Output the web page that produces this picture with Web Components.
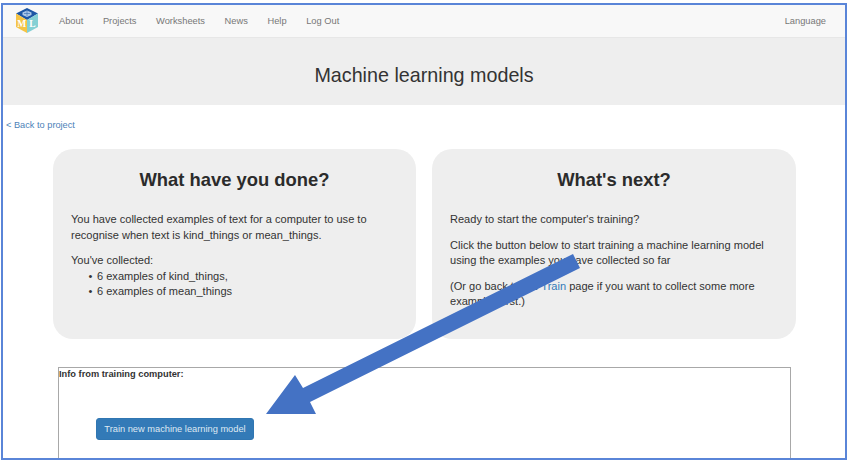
<!DOCTYPE html>
<html lang="en"><head><meta charset="utf-8"><title>Machine learning models</title>
<style>
html,body{margin:0;padding:0;background:#fff}
body{font-family:"Liberation Sans",Arial,sans-serif;width:850px;height:465px;overflow:hidden}
ml-card a{color:#337ab7}
ml-card li{list-style:none}
ml-card li::before{content:"•";display:inline-block;width:8.5px}
</style></head><body>
<ml-frame>
  <ml-nav></ml-nav>
  <ml-title>Machine learning models</ml-title>
  <ml-back>&lt; Back to project</ml-back>
  <ml-cards>
    <ml-card heading="What have you done?">
      <p>You have collected examples of text for a computer to use to recognise when text is kind_things or mean_things.</p>
      <p class="tight">You've collected:</p>
      <ul><li>6 examples of kind_things,</li><li>6 examples of mean_things</li></ul>
    </ml-card>
    <ml-card heading="What's next?">
      <p>Ready to start the computer's training?</p>
      <p>Click the button below to start training a machine learning model using the examples you have collected so far</p>
      <p>(Or go back to the <a>Train</a> page if you want to collect some more examples first.)</p>
    </ml-card>
  </ml-cards>
  <ml-training></ml-training>
  <ml-arrow></ml-arrow>
</ml-frame>
<script>
function def(name, css, html, setup){
  customElements.define(name, class extends HTMLElement{
    constructor(){super();const r=this.attachShadow({mode:'open'});r.innerHTML='<style>'+css+'</style>'+html;if(setup)setup(this,r);}
  });
}
def('ml-frame',`:host{display:block;position:relative;box-sizing:border-box;width:846px;height:457px;margin:3px 0 0 1px;border:2px solid #5a85d8;overflow:hidden;background:#fff;color:#333}`,`<slot></slot>`);
def('ml-nav',`:host{display:flex;align-items:center;box-sizing:border-box;height:33px;background:#f8f8f8;border-bottom:1px solid #e7e7e7;padding:0 19px 1px 13px;font-size:9.3px;color:#777}
svg{display:block;width:22px;height:25px;margin:0 21px 1px 0}
nav{display:flex;gap:19.6px;flex:1}
text{font-family:"Liberation Serif",serif;font-weight:700}`,
`<svg viewBox="0 0 22 25"><polygon points="11,0 22,5.5 11,12 0,5.5" fill="#1c56a4"/><polygon points="0,5.5 11,12 11,25 0,19" fill="#f5c445"/><polygon points="22,5.5 11,12 11,25 22,19" fill="#84d0d4"/><polygon points="11,2.5 15.5,4.5 15.5,7 11,9 6.5,7 6.5,4.5" fill="#a9c6e8"/><path d="M8 5.5h6M11 3v5" stroke="#3d74b8" stroke-width=".7" fill="none"/><text x="5.7" y="19" font-size="9.5" fill="#fff" text-anchor="middle">M</text><text x="16.5" y="19" font-size="9.5" fill="#fff" text-anchor="middle">L</text></svg>
<nav><span>About</span><span>Projects</span><span>Worksheets</span><span>News</span><span>Help</span><span>Log Out</span></nav><span>Language</span>`);
def('ml-title',`:host{display:flex;align-items:center;justify-content:center;height:67px;background:#eee;font-size:19.73px;color:#333;padding-top:7px;box-sizing:border-box}`,`<slot></slot>`);
def('ml-back',`:host{display:block;margin:14px 0 0 3px;font-size:9.23px;line-height:12px;color:#4d82b8}`,`<slot></slot>`);
def('ml-cards',`:host{display:grid;grid-template-columns:363px 364px;gap:16px;margin:18px 0 0 50px}`,`<slot></slot>`);
def('ml-card',`:host{display:block;box-sizing:border-box;height:190px;background:#eee;border-radius:20px;padding:20px 18px 0;font-size:11.05px;line-height:15.6px;color:#333}
h2{margin:0 0 21px;font-size:18.4px;line-height:22px;font-weight:700;text-align:center;color:#2b2b2b}
::slotted(p){margin:0 0 10px}
::slotted(p.tight){margin:0}
::slotted(ul){margin:0;padding-left:17.5px}`,`<h2></h2><slot></slot>`,(h,r)=>{r.querySelector('h2').textContent=h.getAttribute('heading')});
def('ml-training',`:host{display:block;box-sizing:border-box;width:733px;height:100px;margin:28px 0 0 55px;border:1px solid #a8a8a8;font-size:9.27px;line-height:12px;color:#333}
b{display:block}
button{display:block;box-sizing:border-box;width:158px;height:22px;margin:38px 0 0 37px;padding:0;background:#337ab7;border:1px solid #3076b2;border-radius:3px;color:#dfe9f3;font:9.28px "Liberation Sans",Arial,sans-serif}`,`<b>Info from training computer:</b><button>Train new machine learning model</button>`);
def('ml-arrow',`:host{display:block;position:absolute;left:-3px;top:-5px;width:850px;height:465px;pointer-events:none}
svg{display:block}`,`<svg width="850" height="465"><polygon points="573,254 580,268 310,402 316,414 266,414 295,375 303,388" fill="#4472c4"/></svg>`);
</script>
</body></html>
